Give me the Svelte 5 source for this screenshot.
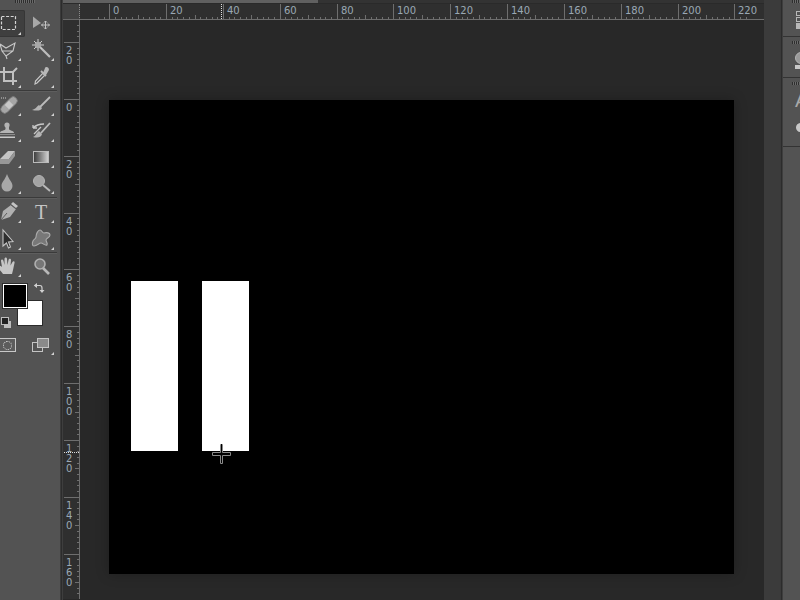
<script>
  const tickStep = 56.82 / 10;
  const hTicks = [];
  for (let i = -2; i <= 112; i++) hTicks.push(i);
  const vTicks = [];
  for (let i = -14; i <= 87; i++) vTicks.push(i);

  function len(i) {
    if (i % 10 === 0) return 16;
    if (i % 5 === 0) return 5;
    return 3;
  }

  const groups = [
    [
      { id: 'marquee', sel: true },
      { id: 'move' },
      { id: 'lasso', tri: true },
      { id: 'wand', tri: true },
      { id: 'crop', tri: true },
      { id: 'dropper', tri: true }
    ],
    [
      { id: 'heal', tri: true },
      { id: 'brush', tri: true },
      { id: 'stamp', tri: true },
      { id: 'history', tri: true },
      { id: 'eraser', tri: true },
      { id: 'gradient', tri: true },
      { id: 'drop', tri: true },
      { id: 'dodge', tri: true }
    ],
    [
      { id: 'pen', tri: true },
      { id: 'type', tri: true },
      { id: 'arrow', tri: true },
      { id: 'shape', tri: true }
    ],
    [
      { id: 'hand', tri: true },
      { id: 'zoom' }
    ]
  ];
</script>

<div class="app">
  <aside class="tools">
    <div class="grip"></div>
    {#each groups as group, g}
      <div class="group g{g}">
        {#each group as t}
          <div class="tool" class:sel={t.sel}>
            <svg viewBox="-12 -12 24 24" width="24" height="24">
              {#if t.id === 'marquee'}
                <rect x="-6.5" y="-6.5" width="14" height="13" fill="none" stroke="#d4d4d4" stroke-width="1.2" stroke-dasharray="3 1.6" />
              {:else if t.id === 'move'}
                <path d="M-8 -6.5 L0 0 L-8 5 Z" fill="#a8a8a8" />
                <path d="M4.5 -2 V6 M0.5 2 H8.5 M3 -0.5 L4.5 -2 L6 -0.5 M3 4.5 L4.5 6 L6 4.5 M2 0.5 L0.5 2 L2 3.5 M7 0.5 L8.5 2 L7 3.5" fill="none" stroke="#c4c4c4" stroke-width="1" />
              {:else if t.id === 'lasso'}
                <path d="M-8 -6 L-2 -2 L7 -7 L5 1 L-2 6 L-6 1 L-8 -6 M-6 1 L5 1 M-2 6 L-1 9" fill="none" stroke="#c8c8c8" stroke-width="1.1" />
              {:else if t.id === 'wand'}
                <path d="M-2 -4 L9 7" stroke="#bdbdbd" stroke-width="2.2" />
                <path d="M-3 -11 V1 M-9 -5 H3 M-7 -9 L1 -1 M-7 -1 L1 -9" stroke="#cfcfcf" stroke-width="1" />
                <circle cx="-3" cy="-5" r="3.2" fill="#a8a8a8" />
              {:else if t.id === 'crop'}
                <path d="M-4 -9 V5 H9 M-8 -4 H5 V9 M5 -4 L9 -8" fill="none" stroke="#c0c0c0" stroke-width="2" />
              {:else if t.id === 'dropper'}
                <path d="M-6 8 L-5.5 5 L2 -3 L4 -1 L-4 7 Z" fill="none" stroke="#c8c8c8" stroke-width="1.2" />
                <path d="M0 -5 L5 0 M3 -3 L5 -8 A1.6 1.6 0 0 1 7 -6 L4 -1" fill="#b8b8b8" stroke="#b8b8b8" stroke-width="1.8" />
              {:else if t.id === 'heal'}
                <g transform="translate(1 0) rotate(-45)">
                  <rect x="-10" y="-4" width="20" height="8" rx="4" fill="#a6a6a6" stroke="#777" stroke-width="0.8" />
                  <rect x="-3" y="-3" width="6" height="6" fill="#c8c8c8" />
                </g>
                <path d="M-7 -7 h1 M-5 -7 h1 M-3 -7 h1" stroke="#ccc" />
              {:else if t.id === 'brush'}
                <path d="M9 -8 L-1 2" stroke="#bcbcbc" stroke-width="1.8" />
                <path d="M-2 0 L1 3 C0 6 -4 6 -9 5 C-5 4 -5 2 -2 0 Z" fill="#b4b4b4" />
              {:else if t.id === 'stamp'}
                <circle cx="-1" cy="-6" r="2.6" fill="#b4b4b4" />
                <path d="M-2.5 -4 H1 V-2 C1 0 6 -1 6 2 H-8 C-8 -1 -2.5 0 -2.5 -2 Z" fill="#b4b4b4" />
                <path d="M-8 3 H7 V4 H-8 Z" fill="#8c8c8c" />
                <path d="M-8 5.5 H7 V7 H-8 Z" fill="#c8c8c8" />
              {:else if t.id === 'history'}
                <path d="M9 -8 L0 2" stroke="#bcbcbc" stroke-width="1.8" />
                <path d="M-2 0 L1 3 C0 7 -4 7 -8 6 C-5 5 -5 2 -2 0 Z" fill="#b4b4b4" />
                <path d="M-8 -3 C-5 -6 -1 -7 3 -7 M-8 -3 L-4 -3 M-8 -3 L-8 -6 M-7 3 L0 -4" fill="none" stroke="#c8c8c8" stroke-width="1.3" />
              {:else if t.id === 'eraser'}
                <path d="M-8 2 L0 -6 H7 L1 2 Z" fill="#c4c4c4" />
                <path d="M-8 2 H1 V7 H-8 Z M1 2 L7 -6 V-1 L1 7 Z" fill="#979797" />
              {:else if t.id === 'gradient'}
                <defs>
                  <linearGradient id="gr" x1="0" x2="1" y1="0" y2="0">
                    <stop offset="0" stop-color="#3a3a3a" />
                    <stop offset="1" stop-color="#d4d4d4" />
                  </linearGradient>
                </defs>
                <rect x="-7.5" y="-5.5" width="15" height="11" fill="url(#gr)" stroke="#bbb" />
              {:else if t.id === 'drop'}
                <path d="M-1 -9 C1 -3 4.5 -1 4.5 3 A5.5 5.5 0 0 1 -6.5 3 C-6.5 -1 -3 -3 -1 -9 Z" fill="#a8a8a8" />
              {:else if t.id === 'dodge'}
                <path d="M2 2 L9 8" stroke="#b8b8b8" stroke-width="2" />
                <circle cx="-2" cy="-2" r="5.5" fill="#a4a4a4" stroke="#b4b4b4" />
              {:else if t.id === 'pen'}
                <path d="M-7 8 L-5 -1 L3 -7 L8 -3 L2 5 Z" fill="#b0b0b0" />
                <path d="M-7 8 L-1 1 M3 -7 L8 -3" fill="none" stroke="#555" stroke-width="0.9" />
                <path d="M3 -8 L5 -10 L10 -6 L8 -4 Z" fill="#c4c4c4" />
              {:else if t.id === 'type'}
                <text class="t-glyph" x="0" y="7" text-anchor="middle">T</text>
              {:else if t.id === 'arrow'}
                <path d="M-5 -9 V7 L-1.5 4 L0.5 9 L2.5 8 L0.5 3 L5 2.5 Z" fill="#2e2e2e" stroke="#c4c4c4" stroke-width="1.1" />
              {:else if t.id === 'shape'}
                <path d="M-1 -9 C1 -9 1 -6 3 -6 C6 -7 9 -6 9 -4 C9 -1 5 -1 5 1 C5 3 7 4 6 6 C4 7 2 4 0 4 C-2 4 -4 7 -7 7 C-9 7 -9 4 -8 2 C-7 0 -5 0 -5 -2 C-5 -5 -3 -9 -1 -9 Z" fill="#787878" stroke="#adadad" stroke-width="1.1" />
              {:else if t.id === 'hand'}
                <path d="M-5 8 C-7 5 -11 2 -9 0 C-8 -1 -6 1 -6 1 L-7 -5 C-7 -7 -5 -7 -4.5 -5 L-3.5 -1 L-3.5 -7 C-3.5 -9 -1 -9 -1 -7 L-0.5 -1 L0.5 -6 C1 -8 3 -7.5 3 -6 L2.5 -0.5 L4.5 -4 C5.5 -5.5 7 -4.5 6.5 -3 L5 4 L4 8 Z" fill="#c6c6c6" />
              {:else if t.id === 'zoom'}
                <path d="M2 2 L8 8" stroke="#b8b8b8" stroke-width="2.6" />
                <circle cx="-1" cy="-2" r="5" fill="#777" stroke="#b0b0b0" stroke-width="1.6" />
              {/if}
            </svg>
            {#if t.tri || t.sel}<span class="tri"></span>{/if}
          </div>
        {/each}
      </div>
    {/each}

    <div class="colors">
      <div class="bg-swatch"></div>
      <div class="fg-swatch"></div>
      <svg class="swap" viewBox="0 0 12 12" width="12" height="12">
        <path d="M3 3.5 H7 Q9 3.5 9 6 V9" fill="none" stroke="#d0d0d0" stroke-width="1.2" />
        <path d="M4 1 V6 L0.8 3.5 Z M6.5 8 H11.5 L9 11 Z" fill="#d0d0d0" />
      </svg>
      <div class="mini">
        <span class="mini-b"></span>
        <span class="mini-f"></span>
      </div>
    </div>

    <div class="modes">
      <div class="mask"><span class="mask-dot"></span></div>
      <div class="screen">
        <span class="screen-a"></span>
        <span class="screen-b"></span>
        <span class="tri"></span>
      </div>
    </div>
  </aside>

  <div class="sep"></div>

  <main class="work">
    <div class="topstrip"></div>
    <div class="rulerrow">
      <div class="corner"></div>
      <svg class="hruler" width="684" height="16" viewBox="0 0 684 16">
        {#each hTicks as i}
          {@const x = Math.round(29.3 + i * tickStep) + 0.5}
          <line x1={x} x2={x} y1={16 - len(i)} y2="16" class="tick" />
          {#if i % 10 === 0}
            <text class="lab" x={x + 3.5} y="10">{i * 2}</text>
          {/if}
        {/each}
        <line x1="0" x2="684" y1="15.5" y2="15.5" class="tick" />
        <line x1="141.5" x2="141.5" y1="0" y2="16" class="marker" />
      </svg>
    </div>
    <div class="body">
      <svg class="vruler" width="17" height="579" viewBox="0 0 17 579">
        {#each vTicks as i}
          {@const y = Math.round(79 + i * tickStep) + 0.5}
          <line x1={17 - len(i)} x2="16" y1={y} y2={y} class="tick" />
          {#if i % 10 === 0}
            {#each String(Math.abs(i * 2)).split('') as d, n}
              <text class="lab" x="3" y={y + 11 + n * 10}>{d}</text>
            {/each}
          {/if}
        {/each}
        <line x1="16.5" x2="16.5" y1="0" y2="579" class="tick" />
        <line x1="1" x2="16" y1="432.5" y2="432.5" class="marker" />
      </svg>
      <div class="stage">
        <div class="canvas">
          <div class="bar"></div>
          <div class="bar"></div>
        </div>
        <svg class="cursor" width="20" height="20" viewBox="0 0 20 20">
          <path d="M9.5 0.5 V8.5 H1.5 V11.5 H9.5 V19.5 H11.5 V11.5 H19.5 V8.5 H11.5 V0.5 Z" fill="none" stroke="#8a8a8a" />
          <path d="M10.5 0 V8" stroke="#000" />
        </svg>
      </div>
    </div>
  </main>

  <div class="strip"></div>
  <div class="sep"></div>

  <aside class="panel">
    <section class="sec s1">
      <div class="pgrip"></div>
      <div class="pgrid">
        <span></span><span></span><span></span>
      </div>
    </section>
    <section class="sec s2">
      <div class="pgrip"></div>
      <div class="globe"></div>
      <div class="gbar"></div>
    </section>
    <section class="sec s3">
      <div class="pgrip"></div>
      <div class="letter">A</div>
      <div class="dot"></div>
    </section>
  </aside>
</div>

<style>
  :global(body) {
    margin: 0;
    background: #535353;
  }
  .app {
    width: 800px;
    height: 600px;
    display: flex;
    overflow: hidden;
    font-family: "DejaVu Sans", sans-serif;
  }
  .tools {
    width: 60px;
    flex: none;
    background: #535353;
    overflow: hidden;
    position: relative;
  }
  .grip {
    width: 20px;
    height: 3px;
    margin-left: 15px;
    margin-bottom: 7px;
    background: repeating-linear-gradient(90deg, #2e2e2e 0 1px, #6a6a6a 1px 2px);
  }
  .group {
    display: grid;
    grid-template-columns: 33px 33px;
    margin-left: -8.5px;
    width: 65px;
    border-bottom: 1px solid #3a3a3a;
    box-shadow: 0 1px 0 #5e5e5e;
  }
  .g0 { grid-auto-rows: 26.5px; height: 80px; }
  .g1 { grid-auto-rows: 26px; height: 105px; padding-top: 1px; }
  .g2 { grid-auto-rows: 27px; height: 54px; }
  .g3 { grid-auto-rows: 26px; height: 26px; border-bottom: 0; box-shadow: none; }
  .tool {
    position: relative;
    display: flex;
    align-items: center;
    justify-content: center;
  }
  .tool.sel {
    background: #3f3f3f;
    border-radius: 2px;
    box-shadow: inset 0 0 0 1px #363636;
  }
  .tri {
    position: absolute;
    right: 4px;
    bottom: 2px;
    width: 0;
    height: 0;
    border-left: 3px solid transparent;
    border-bottom: 3px solid #d2d2d2;
  }
  .t-glyph {
    font-family: "Liberation Serif", serif;
    font-size: 20px;
    fill: #c4c4c4;
  }
  .colors {
    position: relative;
    height: 56px;
  }
  .fg-swatch {
    position: absolute;
    left: 3px;
    top: 5px;
    width: 22px;
    height: 22px;
    background: #000;
    border: 1px solid #fff;
    box-shadow: 0 0 0 1px #2c2c2c;
  }
  .bg-swatch {
    position: absolute;
    left: 18px;
    top: 22px;
    width: 24px;
    height: 24px;
    background: #fff;
    box-shadow: 0 0 0 1px #2c2c2c;
  }
  .swap {
    position: absolute;
    left: 33px;
    top: 3px;
  }
  .mini {
    position: absolute;
    left: 1px;
    top: 38px;
  }
  .mini-b {
    position: absolute;
    left: 3px;
    top: 4px;
    width: 7px;
    height: 7px;
    background: #bdbdbd;
  }
  .mini-f {
    position: absolute;
    left: 0;
    top: 0;
    width: 6px;
    height: 6px;
    background: #222;
    border: 1px solid #bdbdbd;
  }
  .modes {
    display: flex;
    align-items: center;
    height: 20px;
  }
  .mask {
    margin-left: -2px;
    width: 16px;
    height: 12px;
    border: 1px solid #c8c8c8;
    background: #5c5c5c;
    display: flex;
    align-items: center;
    justify-content: center;
  }
  .mask-dot {
    width: 7px;
    height: 7px;
    border: 1px dotted #e0e0e0;
    border-radius: 50%;
  }
  .screen {
    position: relative;
    margin-left: 16px;
    width: 20px;
    height: 15px;
  }
  .screen-a {
    position: absolute;
    left: 0;
    top: 4px;
    width: 9px;
    height: 8px;
    border: 1px solid #c4c4c4;
  }
  .screen-b {
    position: absolute;
    left: 5px;
    top: 0;
    width: 10px;
    height: 8px;
    border: 1px solid #c4c4c4;
    background: #8a8a8a;
  }
  .screen .tri {
    right: -2px;
    bottom: -2px;
  }
  .sep, .strip { flex: none; }
  .sep {
    width: 3px;
    background: linear-gradient(90deg, #3a3a3a 0 1px, #2c2c2c 1px 2px, #3e3e3e 2px);
  }
  .work {
    width: 701px;
    flex: none;
    display: flex;
    flex-direction: column;
    background: #282828;
  }
  .topstrip {
    height: 4px;
    flex: none;
    background: linear-gradient(90deg, #606060 0 255px, #333333 255px);
    border-bottom: 1px solid #2a2a2a;
    box-sizing: border-box;
  }
  .rulerrow {
    display: flex;
    height: 16px;
    flex: none;
    background: #2f2f2f;
  }
  .corner {
    width: 17px;
    flex: none;
    box-sizing: border-box;
    background: #424242;
    border-right: 1px dotted #8a8a8a;
    border-bottom: 1px solid #6a6a6a;
  }
  .hruler, .vruler {
    display: block;
    flex: none;
    background: #2f2f2f;
  }
  .tick {
    stroke: #6e6e6e;
    stroke-width: 1;
  }
  .marker {
    stroke: #e0e0e0;
    stroke-width: 1;
    stroke-dasharray: 1 1;
  }
  .lab {
    font-family: "DejaVu Sans", sans-serif;
    font-size: 10px;
    fill: #9aa8b4;
  }
  .body {
    flex: 1;
    display: flex;
    min-height: 0;
  }
  .stage {
    flex: 1;
    position: relative;
    background: #282828;
    padding: 80px 0 0 29px;
  }
  .canvas {
    width: 625px;
    height: 474px;
    box-sizing: border-box;
    padding: 181px 0 0 22px;
    background: #000;
    display: flex;
    gap: 24px;
    box-shadow: 0 0 12px rgba(0, 0, 0, 0.25);
  }
  .bar {
    width: 47px;
    height: 170px;
    background: #fff;
  }
  .cursor {
    position: absolute;
    left: 131px;
    top: 424px;
  }
  .strip {
    width: 16px;
    background: #3b3b3b;
  }
  .panel {
    flex: 1;
    background: #535353;
    overflow: hidden;
  }
  .sec {
    box-sizing: border-box;
    border-bottom: 1px solid #333;
    padding-left: 9px;
    position: relative;
  }
  .s1 { height: 37px; }
  .s2 { height: 41px; padding-top: 4px; }
  .s3 { height: 69px; padding-top: 4px; }
  .pgrip {
    width: 8px;
    height: 3px;
    background: repeating-linear-gradient(90deg, #2e2e2e 0 1px, #6a6a6a 1px 2px);
  }
  .pgrid {
    margin-top: 8px;
    display: flex;
    flex-direction: column;
    gap: 1px;
    margin-left: 4px;
  }
  .pgrid span {
    display: block;
    width: 8px;
    height: 3px;
    border: 1px solid #b8b8b8;
  }
  .pgrid span:last-child {
    background: #b8b8b8;
    height: 4px;
  }
  .globe {
    margin: 8px 0 0 3px;
    width: 10px;
    height: 10px;
    border-radius: 50%;
    background: #9a9a9a;
    border: 1px solid #b4b4b4;
  }
  .gbar {
    margin: 1px 0 0 3px;
    width: 8px;
    height: 4px;
    background: #c8c8c8;
  }
  .letter {
    position: absolute;
    left: 12px;
    top: 11px;
    font-size: 20px;
    line-height: 22px;
    color: #a8a8a8;
    font-family: "Liberation Sans", sans-serif;
  }
  .dot {
    position: absolute;
    left: 13px;
    top: 45px;
    width: 9px;
    height: 9px;
    border-radius: 50%;
    background: #c8c8c8;
  }
</style>
